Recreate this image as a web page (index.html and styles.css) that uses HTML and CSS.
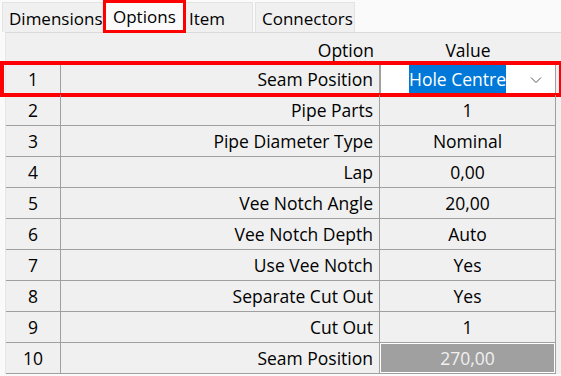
FILE: index.html
```html
<!DOCTYPE html>
<html lang="en">
<head>
    <meta charset="UTF-8">
    <title>Options</title>
    <link rel="stylesheet" href="styles.css">
</head>
<body>
    <div class="tabs">
        <div class="tab tab-dim">Dimensions</div>
        <div class="tab tab-opt active">Options<span class="mark"></span></div>
        <div class="tab tab-item">Item</div>
        <div class="tab tab-conn">Connectors</div>
    </div>

    <div class="panel">
        <div class="row head">
            <div class="cell num"></div>
            <div class="cell opt">Option</div>
            <div class="cell val">Value</div>
        </div>
        <div class="row current">
            <div class="cell num">1</div>
            <div class="cell opt">Seam Position</div>
            <div class="cell val combo">
                <span class="sel">Hole Centre</span>
                <svg class="chev" width="12" height="8" viewBox="0 0 12 8"><path d="M1 1.5 L6 6.5 L11 1.5" fill="none" stroke="#555" stroke-width="1"/></svg>
            </div>
            <span class="mark"></span>
        </div>
        <div class="row"><div class="cell num">2</div><div class="cell opt">Pipe Parts</div><div class="cell val">1</div></div>
        <div class="row"><div class="cell num">3</div><div class="cell opt">Pipe Diameter Type</div><div class="cell val">Nominal</div></div>
        <div class="row"><div class="cell num">4</div><div class="cell opt">Lap</div><div class="cell val">0,00</div></div>
        <div class="row"><div class="cell num">5</div><div class="cell opt">Vee Notch Angle</div><div class="cell val">20,00</div></div>
        <div class="row"><div class="cell num">6</div><div class="cell opt">Vee Notch Depth</div><div class="cell val">Auto</div></div>
        <div class="row"><div class="cell num">7</div><div class="cell opt">Use Vee Notch</div><div class="cell val">Yes</div></div>
        <div class="row"><div class="cell num">8</div><div class="cell opt">Separate Cut Out</div><div class="cell val">Yes</div></div>
        <div class="row"><div class="cell num">9</div><div class="cell opt">Cut Out</div><div class="cell val">1</div></div>
        <div class="row"><div class="cell num">10</div><div class="cell opt">Seam Position</div><div class="cell val disabled">270,00</div></div>
    </div>
</body>
</html>
```

FILE: styles.css
```css
* {
    margin: 0;
    padding: 0;
    box-sizing: border-box;
    font-family: 'Open Sans', 'Noto Sans', sans-serif;
}
body {
    background-color: #fafafa;
    width: 561px;
    height: 376px;
    overflow: hidden;
    font-size: 17.5px;
    color: #000;
}

/* Tabs */
.tabs {
    display: flex;
    align-items: flex-end;
    height: 32px;
    padding-left: 2px;
}
.tab {
    position: relative;
    height: 30px;
    line-height: 32px;
    font-size: 17px;
    background-color: #f0f0f0;
    border: 1px solid #e3e3e3;
    border-bottom: none;
    white-space: nowrap;
}
.tab-dim {
    width: 101px;
    padding-left: 6px;
}
.tab-opt {
    width: 83px;
    height: 33px;
    margin-bottom: -1px;
    line-height: 32px;
    padding-left: 9px;
    background-color: #fafafa;
    border-color: #dadada;
}
.tab-item {
    width: 67px;
    padding-left: 3px;
    border-left: none;
}
.tab-conn {
    width: 100px;
    padding-left: 6px;
    margin-left: 2px;
}
.mark {
    position: absolute;
    border: 4px solid #ff0000;
    pointer-events: none;
}
.tab-opt .mark {
    left: -1px;
    top: -1px;
    right: -1px;
    bottom: 0;
    border-width: 3px;
}

/* Grid */
.panel {
    margin-left: 5px;
    width: 556px;
    border-top: 1px solid #dadada;
    border-left: 1px solid #e6e6e6;
    background-color: #f0f0f0;
}
.row {
    position: relative;
    display: grid;
    grid-template-columns: 55px 319px 176px;
    height: 31px;
}
.cell {
    height: 31px;
    line-height: 30px;
    border-right: 1px solid #a0a0a0;
    border-bottom: 1px solid #a0a0a0;
    white-space: nowrap;
}
.num {
    text-align: center;
}
.opt {
    text-align: right;
    padding-right: 6px;
}
.val {
    text-align: center;
}
.head .cell {
    border: none;
    line-height: 34px;
}
.current .mark {
    left: -6px;
    right: -2px;
    top: -3px;
    bottom: -2px;
}
.combo {
    position: relative;
    background-color: #fff;
    border-left: 2px solid #a0a0a0;
    margin-left: -1px;
    text-align: left;
    padding-left: 28px;
}
.sel {
    background-color: #0078d7;
    color: #fff;
    padding: 2px 0;
}
.chev {
    position: absolute;
    right: 13px;
    top: 12px;
}
.disabled {
    background-color: #a0a0a0;
    color: #f0f0f0;
    box-shadow: inset 0 0 0 1px #fff;
}
```
